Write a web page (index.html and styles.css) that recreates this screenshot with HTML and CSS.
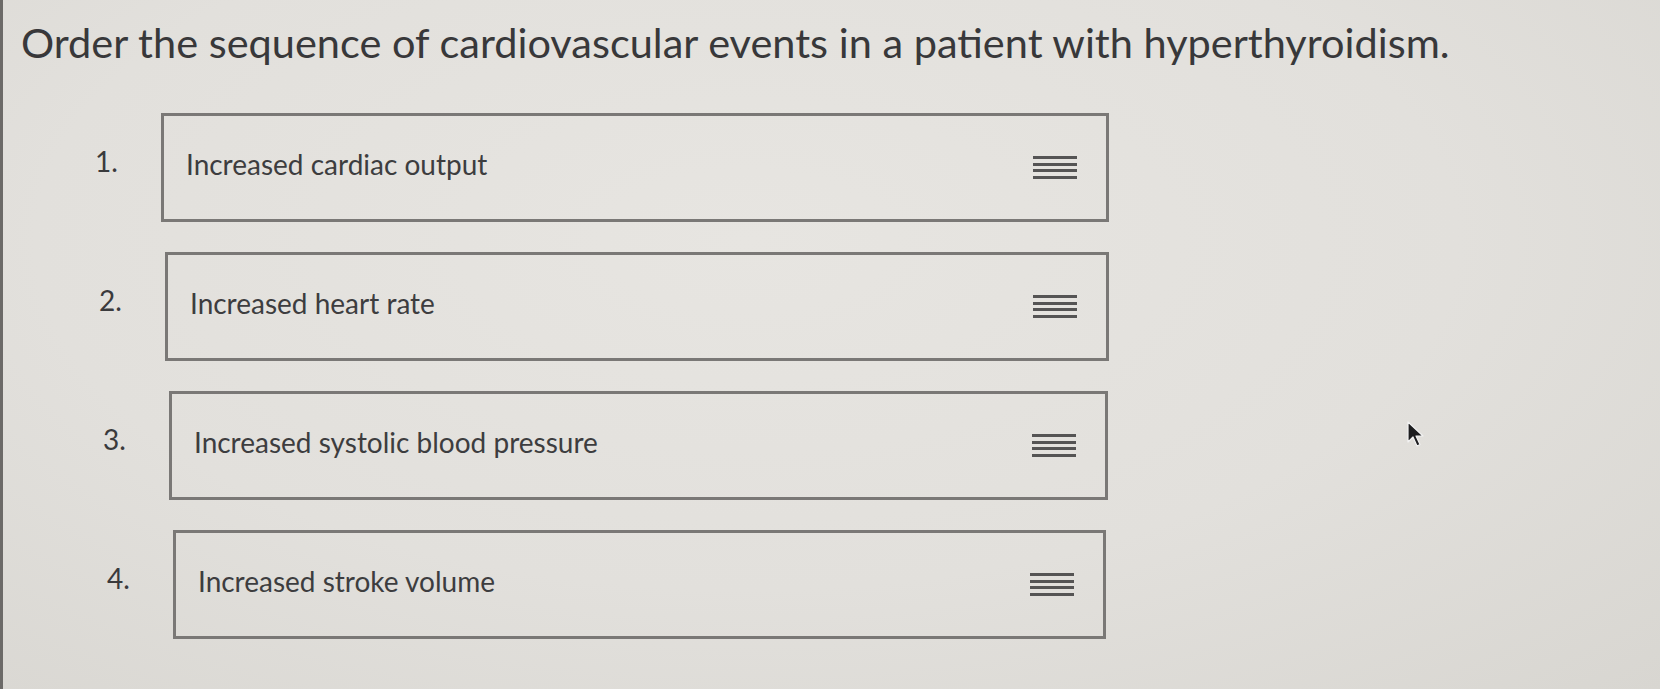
FILE: index.html
```html
<!DOCTYPE html>
<html>
<head>
<meta charset="utf-8">
<link rel="stylesheet" href="styles.css">
</head>
<body>
<div class="page">
  <h1 class="title">Order the sequence of cardiovascular events in a patient with hyperthyroidism.</h1>
  <ol class="items">
    <li class="row">
      <span class="num">1.</span>
      <div class="box"><span class="label">Increased cardiac output</span><span class="grip"><i></i><i></i><i></i><i></i></span></div>
    </li>
    <li class="row">
      <span class="num">2.</span>
      <div class="box"><span class="label">Increased heart rate</span><span class="grip"><i></i><i></i><i></i><i></i></span></div>
    </li>
    <li class="row">
      <span class="num">3.</span>
      <div class="box"><span class="label">Increased systolic blood pressure</span><span class="grip"><i></i><i></i><i></i><i></i></span></div>
    </li>
    <li class="row">
      <span class="num">4.</span>
      <div class="box"><span class="label">Increased stroke volume</span><span class="grip"><i></i><i></i><i></i><i></i></span></div>
    </li>
  </ol>
  <svg class="cursor" width="22" height="30" viewBox="0 0 22 30"><path d="M2 2 L2 22 L7 17 L11 26 L14 24.5 L10 16 L17 16 Z" fill="#1d1d1f" stroke="#f2f2f2" stroke-width="1.2" stroke-linejoin="round"/></svg>
</div>
</body>
</html>
```
FILE: styles.css
```css
html, body {
  margin: 0;
  padding: 0;
}
body {
  width: 1660px;
  height: 689px;
  overflow: hidden;
  background: radial-gradient(ellipse at 45% 35%, #e7e5e1 0%, #e2e0dc 55%, #d8d6d1 100%);
  font-family: "Lato", "Open Sans", sans-serif;
  color: #3b3b3d;
}
.page {
  position: relative;
  height: 689px;
  border-left: 3px solid #6c6a68;
  box-sizing: border-box;
  padding: 14px 0 0 18px;
}
.title {
  margin: 0;
  font-weight: 400;
  font-size: 41.5px;
  line-height: 56px;
  color: #38383a;
  white-space: nowrap;
}
.items {
  list-style: none;
  margin: 43px 0 0 0;
  padding: 0;
  display: flex;
  flex-direction: column;
  gap: 30px;
}
.row {
  display: flex;
  align-items: center;
}
.num {
  width: 66px;
  padding-left: 74px;
  font-size: 28px;
  margin-top: -14px;
  color: #3a3a3c;
}
.box {
  width: 948px;
  height: 109px;
  box-sizing: border-box;
  border: 3px solid #7a7876;
  display: flex;
  align-items: center;
  justify-content: space-between;
  padding: 0 29px 0 22px;
}
.label {
  font-size: 28px;
  margin-top: -7px;
  color: #3d3d3f;
}
.grip {
  display: flex;
  flex-direction: column;
  gap: 3.5px;
  width: 44px;
}
.grip i {
  display: block;
  height: 3.2px;
  background: #555454;
}
.row:nth-child(1) .num { padding-left: 74px; }
.row:nth-child(2) .num { padding-left: 78px; }
.row:nth-child(2) .box { width: 944px; }
.row:nth-child(3) .num { padding-left: 82px; }
.row:nth-child(3) .box { width: 939px; }
.row:nth-child(4) .num { padding-left: 86px; }
.row:nth-child(4) .box { width: 933px; }
.cursor {
  position: absolute;
  left: 1403px;
  top: 420px;
}
```
